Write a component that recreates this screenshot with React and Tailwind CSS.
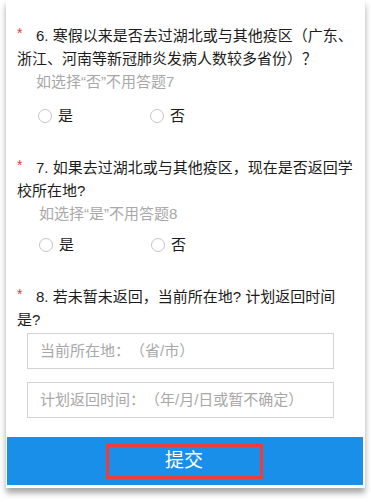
import React from "react";

const font = { fontFamily: '"Liberation Sans", "Noto Sans CJK SC", sans-serif' };

function Title({ num, lines }) {
  return (
    <div className="text-[15px] leading-[23px] text-[#1c1c1c]">
      <span className="inline-block w-[19px] align-top pt-[2px] text-[14px] leading-[14px] text-[#e4393c]">*</span>
      {num}
      {lines.map((l, i) => (
        <React.Fragment key={i}>
          {i > 0 && <br />}
          {l}
        </React.Fragment>
      ))}
    </div>
  );
}

function Radio({ label }) {
  return (
    <div className="flex items-center w-[112px]">
      <span className="w-[14px] h-[14px] rounded-full border border-[#c4c4c4] bg-white" />
      <span className="ml-[6px] text-[15px] text-[#1c1c1c]">{label}</span>
    </div>
  );
}

function Input({ placeholder }) {
  return (
    <div className="ml-[10px] w-[307px] h-[36px] border border-[#d3d3d3] flex items-center pl-[12px] text-[15px] text-[#a8a8a8]">
      {placeholder}
    </div>
  );
}

export default function App() {
  return (
    <div className="w-[371px] h-[502px] bg-white overflow-hidden [text-spacing-trim:space-all]" style={font}>
      <div className="ml-[6px] w-[359px] h-[488px] bg-white shadow-[0_5px_6px_rgba(0,0,0,0.35)] flex flex-col">
        <div className="pl-[11px] pr-[6px] pt-[24px]">
          <Title num="6. 寒假以来是否去过湖北或与其他疫区（广东、" lines={["", "浙江、河南等新冠肺炎发病人数较多省份）？"]} />
          <div className="ml-[19px] mt-[1px] text-[15px] leading-[22px] text-[#a8a8a8]">如选择“否”不用答题7</div>
          <div className="flex ml-[21px] mt-[12px] h-[22px]">
            <Radio label="是" />
            <Radio label="否" />
          </div>
        </div>
        <div className="pl-[11px] pr-[6px] pt-[29px]">
          <Title num="7. 如果去过湖北或与其他疫区，现在是否返回学" lines={["", "校所在地?"]} />
          <div className="ml-[22px] mt-[1px] text-[15px] leading-[22px] text-[#a8a8a8]">如选择“是”不用答题8</div>
          <div className="flex ml-[22px] mt-[9px] h-[22px]">
            <Radio label="是" />
            <Radio label="否" />
          </div>
        </div>
        <div className="pl-[11px] pr-[6px] pt-[29px]">
          <Title num="8. 若未暂未返回，当前所在地? 计划返回时间" lines={["", "是?"]} />
          <div className="mt-[2px]">
            <Input placeholder="当前所在地：（省/市）" />
          </div>
          <div className="mt-[13px]">
            <Input placeholder="计划返回时间：（年/月/日或暂不确定）" />
          </div>
        </div>
        <div className="mt-[19px] ml-[1px] w-[356px] h-[48px] bg-[#1a8fe9] flex items-center justify-center">
          <div className="w-[157px] h-[35px] border-[3px] border-[#f23a3a] flex items-center justify-center text-white text-[19px] ml-[-2px]">
            提交
          </div>
        </div>
      </div>
    </div>
  );
}
